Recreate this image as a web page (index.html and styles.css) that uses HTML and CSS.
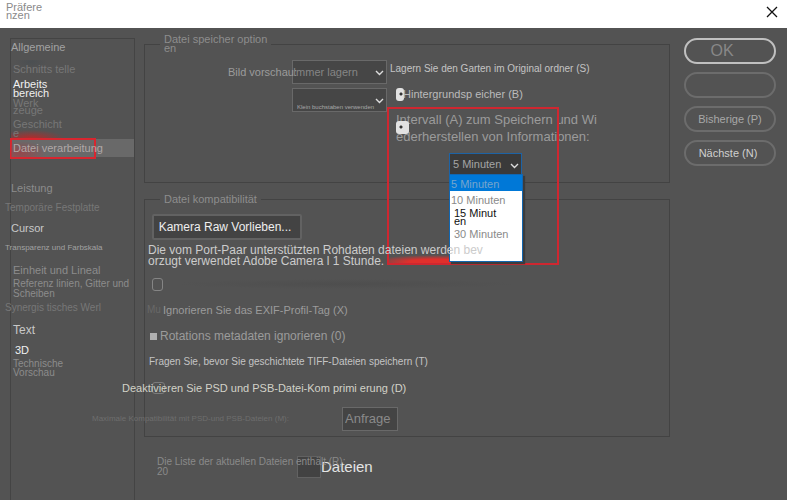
FILE: index.html
```html
<!DOCTYPE html>
<html lang="de">
  <head>
    <meta charset="UTF-8" />
    <title>Präferenzen</title>
    <link rel="stylesheet" href="styles.css">
  </head>
  <body>
    <!-- title bar -->
    <header class="titlebar">
      <h1>Präfere<br>nzen</h1>
      <button type="button" class="close" aria-label="Schließen">
        <svg width="12" height="12" viewBox="0 0 12 12"><path d="M1 1l10 10M11 1L1 11" stroke="#111" stroke-width="1.3" fill="none" /></svg>
      </button>
    </header>

    <div class="dialog">
      <!-- categories -->
      <nav class="sidebar">
        <ul>
          <li><a href="#" class="mid flush">Allgemeine</a></li>
          <li class="gap"><a href="#" class="dim smudge">Schnitts telle</a></li>
          <li class="near"><a href="#" class="white two">Arbeits<br>bereich</a></li>
          <li class="near"><a href="#" class="dim tight">Werk<br>zeuge</a></li>
          <li class="wide"><a href="#" class="dim two ember">Geschicht<br>e</a></li>
          <li class="active"><a href="#">Datei verarbeitung</a></li>
          <li class="section"><a href="#" class="soft flush">Leistung</a></li>
          <li class="near"><a href="#" class="dim small out">Temporäre Festplatte</a></li>
          <li class="near"><a href="#" class="light flush">Cursor</a></li>
          <li class="near"><a href="#" class="mid tiny out">Transparenz und Farbskala</a></li>
          <li class="gap"><a href="#" class="soft">Einheit und Lineal</a></li>
          <li><a href="#" class="soft small lines">Referenz linien, Gitter und<br>Scheiben</a></li>
          <li><a href="#" class="dim small out">Synergis tisches Werl</a></li>
          <li class="gap"><a href="#" class="light large">Text</a></li>
          <li class="near"><a href="#" class="white indent">3D</a></li>
          <li><a href="#" class="soft small two">Technische<br>Vorschau</a></li>
        </ul>
      </nav>

      <!-- settings -->
      <main class="settings">
        <fieldset class="group saving">
          <legend>Datei speicher option<br>en</legend>
          <div class="columns">
            <div class="previews">
              <div class="field">
                <label for="preview">Bild vorschau:</label>
                <span class="select">
                  <select id="preview"><option>Immer lagern</option></select>
                  <svg class="arrow" width="9" height="6" viewBox="0 0 9 6"><path d="M1 1l3.500 3.500L8 1" /></svg>
                </span>
              </div>
              <div class="field">
                <span class="select extension">
                  <select aria-label="Dateierweiterung"><option>Klein buchstaben verwenden</option></select>
                  <svg class="arrow" width="9" height="6" viewBox="0 0 9 6"><path d="M1 1l3.500 3.500L8 1" /></svg>
                </span>
              </div>
            </div>
            <div class="autosave">
              <p class="original">Lagern Sie den Garten im Original ordner (S)</p>
              <div class="background">
                <input type="checkbox" id="background" checked>
                <label for="background">Hintergrundsp eicher (B)</label>
              </div>
              <div class="interval">
                <input type="checkbox" id="interval" checked>
                <label for="interval">Intervall (A) zum Speichern und Wi<br>ederherstellen von Informationen:</label>
              </div>
              <div class="minutes">
                <span class="select">
                  <select aria-label="Intervall"><option>5 Minuten</option></select>
                  <svg class="arrow" width="9" height="6" viewBox="0 0 9 6"><path d="M1 1l3.500 3.500L8 1" /></svg>
                </span>
                <ul class="menu" role="listbox" aria-label="Intervall">
                  <li role="option" aria-selected="true">5 Minuten</li>
                  <li role="option">10 Minuten</li>
                  <li role="option" class="strong">15 Minut<br>en</li>
                  <li role="option" class="last">30 Minuten</li>
                </ul>
              </div>
              <div class="marker"></div>
            </div>
          </div>
        </fieldset>

        <fieldset class="group compat">
          <legend>Datei kompatibilität</legend>
          <button type="button" class="raw">Kamera Raw Vorlieben...</button>
          <p class="note">Die vom Port-Paar unterstützten Rohdaten dateien werden bev<br>orzugt verwendet Adobe Camera l 1 Stunde.</p>
          <div class="checks">
            <div class="check blank"><input type="checkbox" aria-label="Adobe Camera Raw"><span class="trace"></span></div>
            <div class="check exif"><span class="ghost">Mu</span><label for="exif">Ignorieren Sie das EXIF-Profil-Tag (X)</label><input type="checkbox" id="exif"></div>
            <div class="check rotate"><input type="checkbox" id="rotate"><label for="rotate">Rotations metadaten ignorieren (0)</label></div>
            <div class="check tiff"><label for="tiff">Fragen Sie, bevor Sie geschichtete TIFF-Dateien speichern (T)</label><input type="checkbox" id="tiff"></div>
            <div class="check psd"><input type="checkbox" id="psd"><label for="psd">Deaktivieren Sie PSD und PSB-Datei-Kom primi erung (D)</label></div>
          </div>
          <div class="maximize">
            <label for="maximize">Maximale Kompatibilität mit PSD-und PSB-Dateien (M):</label>
            <select id="maximize"><option>Anfrage</option></select>
          </div>
        </fieldset>

        <div class="recent">
          <label for="recent">Die Liste der aktuellen Dateien enthält (R):<br>20</label>
          <input type="text" id="recent">
          <span>Dateien</span>
        </div>
      </main>

      <!-- actions -->
      <div class="actions">
        <button type="button" class="ok">OK</button>
        <button type="button" aria-label="Abbrechen"></button>
        <button type="button">Bisherige (P)</button>
        <button type="button" class="next">Nächste (N)</button>
      </div>
    </div>
  </body>
</html>
```
FILE: styles.css
```css
* {
  box-sizing: border-box;
}
html,
body,
h1,
ul,
p {
  margin: 0;
  padding: 0;
}
ul {
  list-style: none;
}
body {
  display: flex;
  flex-direction: column;
  min-height: 100vh;
  background-color: #535353;
  color: #9b9b9b;
  font-family: "Liberation Sans", Arial, sans-serif;
  font-size: 11px;
  line-height: 18px;
  white-space: nowrap;
  overflow-x: hidden;
}
button,
input,
select {
  margin: 0;
  padding: 0;
  font: inherit;
  color: inherit;
}
select,
input {
  appearance: none;
  border-radius: 0;
}

/* title bar */
.titlebar {
  display: flex;
  justify-content: space-between;
  height: 28px;
  padding: 3px 9px 0 6px;
  background-color: #fff;
}
.titlebar h1 {
  color: #8a8a8a;
  font-size: 11px;
  font-weight: normal;
  line-height: 8px;
}
.close {
  display: flex;
  align-self: flex-start;
  padding-top: 3px;
  border: 0;
  background: none;
}

.dialog {
  display: flex;
  flex: 1;
  padding: 0 11px 0 10px;
}

/* sidebar */
.sidebar {
  width: 125px;
  margin-top: 10px;
  border: 1px solid #444;
  border-bottom: 0;
}
.sidebar ul {
  margin-top: -1px;
}
.sidebar a {
  display: block;
  padding-left: 2px;
  color: #979797;
  text-decoration: none;
}
.sidebar .gap {
  margin-top: 4px;
}
.sidebar .near {
  margin-top: 2px;
}
.sidebar .wide {
  margin-top: 6px;
}
.sidebar .section {
  margin-top: 22px;
}
.sidebar .flush {
  padding-left: 0;
}
.sidebar .out {
  margin-left: -6px;
  padding-left: 0;
}
.sidebar .indent {
  padding-left: 4px;
}
.sidebar .dim {
  color: #777;
}
.sidebar .soft {
  color: #8c8c8c;
}
.sidebar .mid {
  color: #a2a2a2;
}
.sidebar .light {
  color: #c8c8c8;
}
.sidebar .white {
  color: #f0f0f0;
}
.sidebar .large {
  font-size: 12px;
}
.sidebar .small {
  font-size: 10px;
}
.sidebar .tiny {
  font-size: 8px;
}
.sidebar .two {
  line-height: 9px;
}
.sidebar .tight {
  line-height: 7px;
}
.sidebar .lines {
  line-height: 10px;
}
.sidebar .smudge {
  background: radial-gradient(ellipse 16px 7px at 20px 2px, #4b4f52, transparent);
}
.sidebar .ember {
  background: radial-gradient(ellipse 34px 8px at 20px 18px, #b02c2c, transparent);
}
.sidebar .active {
  position: relative;
  margin-top: 1px;
  background-color: #696969;
}
.sidebar .active a {
  position: relative;
  z-index: 1;
  color: #b0a8a8;
  background: radial-gradient(ellipse 26px 12px at 10px 14px, #94484c, transparent);
}
/* red frame round the open category */
.sidebar .active::after {
  content: '';
  position: absolute;
  top: -1px;
  left: -1px;
  width: 86px;
  height: 21px;
  border: 2px solid #d8262f;
  box-sizing: border-box;
}

/* groups */
.settings {
  flex: 1;
  min-width: 0;
  margin: 7px 14px 0 9px;
}
.group {
  min-width: 0;
  margin: 0;
  padding: 0;
  border: 1px solid #434343;
}
.group legend {
  margin-left: 15px;
  padding: 0 4px;
  color: #8d8d8d;
}
.saving legend {
  line-height: 9px;
}
.columns {
  display: flex;
  gap: 3px;
  padding-top: 7px;
}
.previews {
  display: flex;
  flex-direction: column;
  align-items: flex-end;
  gap: 4px;
  width: 242px;
}
.field {
  display: flex;
  align-items: center;
}
.field label {
  margin-right: -5px;
  z-index: 1;
}
.select {
  display: block;
  position: relative;
  width: 95px;
  height: 24px;
}
.select select {
  width: 100%;
  height: 100%;
  border: 1px solid #696969;
  background-color: #464646;
  color: #858585;
}
.arrow {
  position: absolute;
  top: 10px;
  right: 3px;
  fill: none;
  stroke: #ddd;
  stroke-width: 1.4;
}
.extension select {
  padding: 13px 0 0 4px;
  color: #a8a8a8;
  font-size: 6px;
  line-height: 8px;
}

/* autosave */
.autosave {
  position: relative;
}
.original {
  color: #c4c4c4;
  font-size: 10px;
}
.background {
  display: flex;
  align-items: center;
  margin-top: 7px;
  padding-left: 6px;
  color: #bbb;
}
.background input,
.interval input {
  height: 13px;
  border-radius: 3px;
  background: radial-gradient(circle at 5px 6px, #333 1px, #e2e2e2 2px);
}
.background input {
  width: 8px;
}
.background label {
  margin-left: -1px;
}
.interval {
  position: relative;
  margin-top: 8px;
  padding-left: 6px;
  font-size: 13px;
  line-height: 17px;
}
.interval label {
  display: block;
}
.interval input {
  position: absolute;
  top: 10px;
  left: 6px;
  width: 13px;
}
.minutes {
  position: relative;
  width: 73px;
  margin: 8px 0 7px 59px;
}
.minutes .select {
  width: 100%;
  height: 22px;
}
.minutes select {
  padding-left: 3px;
  border-color: #1d63a5;
  background-color: #3a3a3a;
  color: #a5a5a5;
}
.menu {
  position: absolute;
  top: 21px;
  left: 0;
  z-index: 2;
  width: 74px;
  height: 88px;
  border: 1px solid #1266b0;
  background-color: #fff;
  color: #8a8a8a;
  box-shadow: 2px 2px 1px #3c3c3c;
}
.menu li {
  padding-left: 1px;
}
.menu li:first-child {
  height: 16px;
  background-color: #0078d7;
  color: #77a5cc;
}
.menu .strong {
  padding-left: 4px;
  color: #111;
  line-height: 8px;
}
.menu .last {
  padding-left: 4px;
}
/* red frame round the interval */
.marker {
  position: absolute;
  top: 47px;
  left: -3px;
  z-index: 1;
  width: 172px;
  height: 158px;
  border: 2px solid #cf2730;
  background: radial-gradient(ellipse 66px 7px at 46px 153px, #e0302c 40%, transparent);
}

/* compatibility */
.compat {
  margin-top: 7px;
  padding: 6px 0 5px 7px;
}
.compat legend {
  margin-left: 8px;
}
.raw {
  display: block;
  width: 150px;
  height: 26px;
  padding-right: 4px;
  border: 2px solid #626262;
  border-radius: 2px;
  background-color: #434343;
  color: #eee;
  font-size: 12px;
}
.note {
  position: relative;
  z-index: 3;
  margin: 5px 0 8px -4px;
  color: #ccc;
  font-size: 12px;
  line-height: 11px;
}
.checks {
  display: flex;
  flex-direction: column;
  gap: 8px;
}
.check {
  display: flex;
  align-items: center;
  height: 18px;
}
.blank input {
  width: 11px;
  height: 13px;
  border: 1px solid #858585;
  border-radius: 3px;
}
.trace {
  width: 340px;
  height: 10px;
  margin-left: 12px;
  background: radial-gradient(ellipse closest-side, #4e4e4e, transparent);
}
.exif {
  margin-left: -5px;
}
.exif .ghost {
  width: 16px;
  color: #686868;
  font-size: 10px;
}
.exif input,
.tiff input {
  width: 0;
  height: 0;
}
.rotate {
  margin-left: -2px;
  font-size: 12px;
}
.rotate input {
  width: 7px;
  height: 7px;
  margin-right: 3px;
  background-color: #b0b0b0;
}
.tiff {
  margin-left: -3px;
  color: #c4c4c4;
  font-size: 10px;
}
.psd {
  position: relative;
  margin-left: -30px;
  color: #d2d2c8;
}
.psd input {
  position: absolute;
  left: 30px;
  width: 13px;
  height: 12px;
  border: 1px solid #7c7c7c;
  border-radius: 3px;
}
.psd label {
  position: relative;
}
.maximize {
  display: flex;
  align-items: center;
  margin: 10px 0 0 -60px;
}
.maximize label {
  width: 250px;
  color: #6e6e6e;
  font-size: 8px;
}
.maximize select {
  width: 56px;
  height: 24px;
  padding-left: 2px;
  border: 1px solid #696969;
  background-color: #444;
  color: #8a8a8a;
  font-size: 13px;
}

/* recent files */
.recent {
  display: flex;
  align-items: center;
  margin: 19px 0 0 13px;
}
.recent label {
  z-index: 1;
  width: 140px;
  color: #8a8a8a;
  font-size: 10px;
  line-height: 10px;
}
.recent input {
  width: 24px;
  height: 22px;
  border: 1px solid #626262;
  background-color: #424242;
}
.recent span {
  color: #e4e4e4;
  font-size: 15px;
}

/* actions */
.actions {
  display: flex;
  flex-direction: column;
  gap: 8px;
  width: 92px;
  padding-top: 10px;
}
.actions button {
  height: 26px;
  border: 2px solid #6c6c6c;
  border-radius: 13px;
  background: none;
  color: #a8a8a8;
}
.actions .ok {
  padding-right: 16px;
  border-color: #c0c0c0;
  color: #888;
  font-size: 16px;
}
.actions .next {
  padding-right: 4px;
  color: #d0d0d0;
}
```
